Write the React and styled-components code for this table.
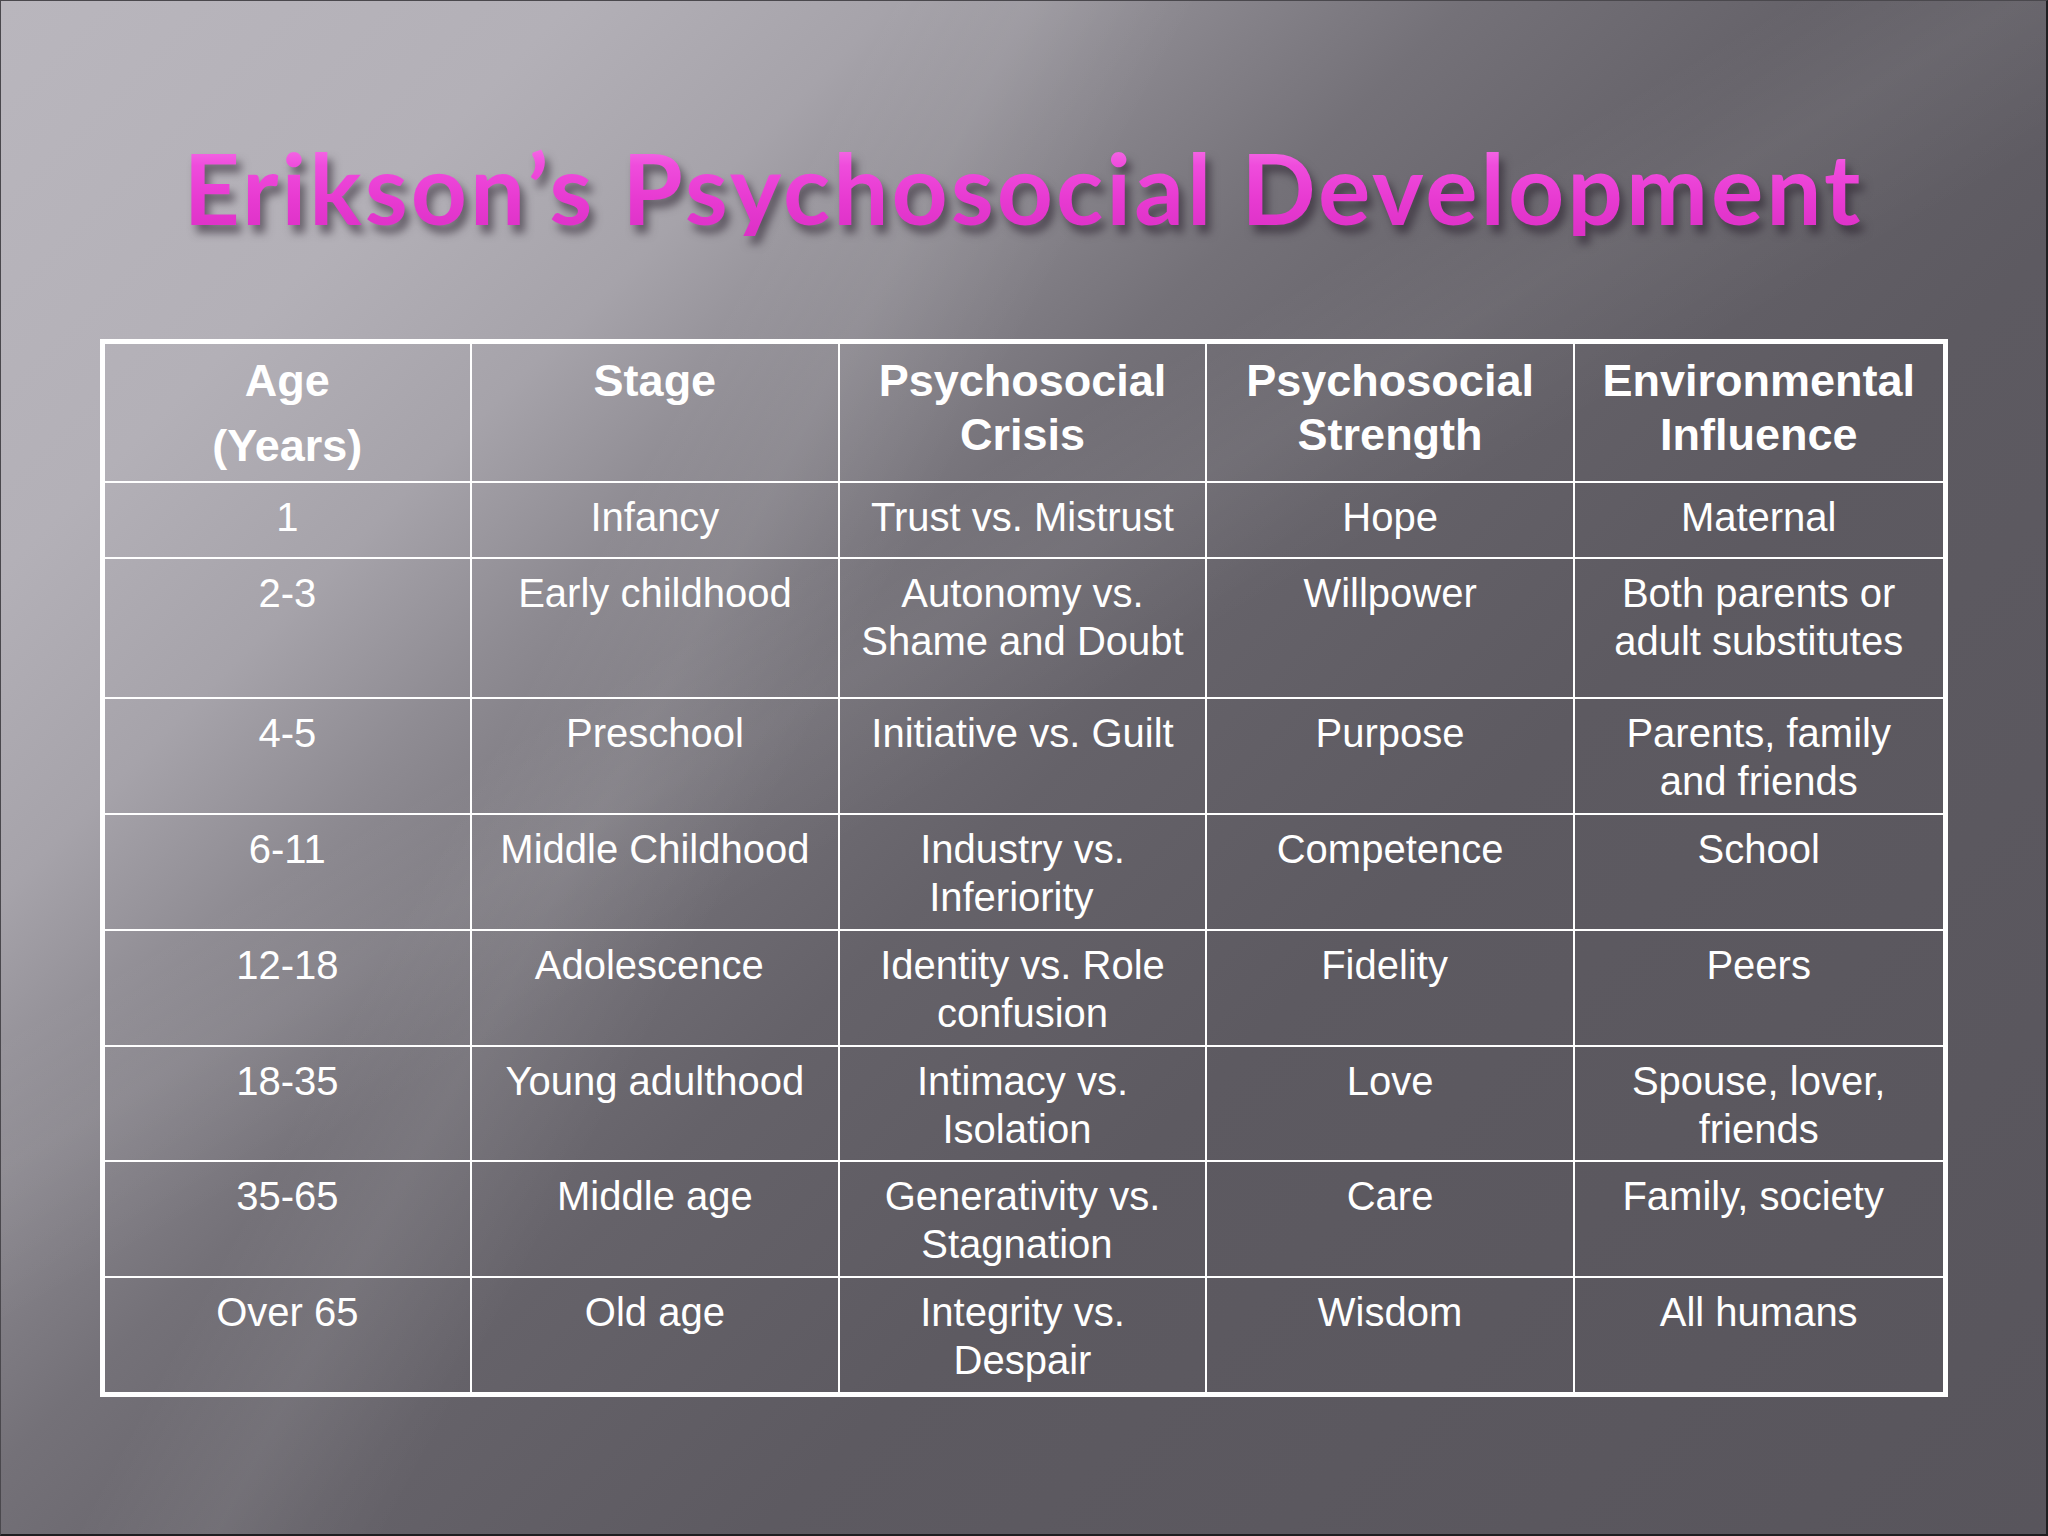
import React from 'react';
import styled, { createGlobalStyle } from 'styled-components';

const Global = createGlobalStyle`
  html, body { margin: 0; padding: 0; background: #58555c; }
  #root { width: 2048px; height: 1536px; }
`;

const Slide = styled.div`
  box-sizing: border-box;
  width: 2048px;
  height: 1536px;
  border-top: 1px solid #4a484d;
  border-left: 1px solid #4a484d;
  border-right: 2px solid #1f1e21;
  border-bottom: 2px solid #1f1e21;
  display: flex;
  flex-direction: column;
  align-items: center;
  font-family: "Liberation Sans", Arial, sans-serif;
  background:
    linear-gradient(118deg, rgba(255,255,255,0) 0%, rgba(255,255,255,0) 31%, rgba(255,255,255,0.07) 36%, rgba(255,255,255,0) 42%, rgba(255,255,255,0) 100%),
    linear-gradient(150deg, rgba(255,255,255,0) 0%, rgba(255,255,255,0) 38%, rgba(255,255,255,0.05) 43%, rgba(255,255,255,0) 49%, rgba(255,255,255,0) 100%),
    linear-gradient(135deg, #b9b6bd 0%, #b3b0b7 16%, #a6a3aa 25%, #8e8b92 32%, #747178 41%, #656269 51%, #5d5a61 64%, #58555c 100%);
`;

const Title = styled.h1`
  margin: 137px 0 0;
  font-family: Lato, "Open Sans", sans-serif;
  font-weight: 700;
  font-size: 98px;
  line-height: 98px;
  letter-spacing: 3px;
  white-space: nowrap;
  color: transparent;
  background: linear-gradient(to bottom, #f77be9 0%, #ef4cdc 28%, #e83bd2 60%, #dc30c6 100%);
  -webkit-background-clip: text;
  background-clip: text;
  filter: drop-shadow(5px 8px 4px rgba(35, 25, 38, 0.55));
`;

const Grid = styled.div`
  box-sizing: border-box;
  width: 1848px;
  margin-top: 103px;
  border: 5px solid #ffffff;
  display: grid;
  grid-template-columns: repeat(5, 1fr);
  grid-template-rows: 139px 76px 140px 116px 116px 116px 115px 116px 114px;
`;

const Cell = styled.div`
  box-sizing: border-box;
  border-right: ${p => (p.$lastCol ? 0 : 2)}px solid #ffffff;
  border-bottom: ${p => (p.$lastRow ? 0 : 2)}px solid #ffffff;
  padding: 10px 4px 0;
  text-align: center;
  color: #ffffff;
  white-space: nowrap;
  font-size: ${p => (p.$head ? 45 : 40)}px;
  font-weight: ${p => (p.$head ? 700 : 400)};
  line-height: ${p => (p.$head ? 54 : 48)}px;
`;

const Para = styled.span`
  display: block;
  margin-top: ${p => p.$gap || 0}px;
`;

const header = [
  ['Age', '(Years)'],
  ['Stage'],
  ['Psychosocial', 'Crisis'],
  ['Psychosocial', 'Strength'],
  ['Environmental', 'Influence'],
];

const rows = [
  [['1'], ['Infancy'], ['Trust vs. Mistrust'], ['Hope'], ['Maternal']],
  [['2-3'], ['Early childhood'], ['Autonomy vs.', 'Shame and Doubt'], ['Willpower'], ['Both parents or', 'adult substitutes']],
  [['4-5'], ['Preschool'], ['Initiative vs. Guilt'], ['Purpose'], ['Parents, family', 'and friends']],
  [['6-11'], ['Middle Childhood'], ['Industry vs.', 'Inferiority\u00a0\u00a0'], ['Competence'], ['School']],
  [['12-18'], ['Adolescence\u00a0'], ['Identity vs. Role', 'confusion'], ['Fidelity\u00a0'], ['Peers']],
  [['18-35'], ['Young adulthood'], ['Intimacy vs.', 'Isolation\u00a0'], ['Love'], ['Spouse, lover,', 'friends']],
  [['35-65'], ['Middle age'], ['Generativity vs.', 'Stagnation\u00a0'], ['Care'], ['Family, society\u00a0']],
  [['Over 65'], ['Old age'], ['Integrity vs.', 'Despair'], ['Wisdom'], ['All humans']],
];

const Lines = ({ lines }) =>
  lines.map((l, i) => (
    <React.Fragment key={i}>
      {i > 0 && <br />}
      {l}
    </React.Fragment>
  ));

export default function App() {
  return (
    <>
      <Global />
      <Slide>
        <Title>Erikson’s Psychosocial Development</Title>
        <Grid>
          {header.map((h, c) => (
            <Cell key={'h' + c} $head $lastCol={c === 4}>
              {c === 0 ? (
                <>
                  <Para>{h[0]}</Para>
                  <Para $gap={11}>{h[1]}</Para>
                </>
              ) : (
                <Lines lines={h} />
              )}
            </Cell>
          ))}
          {rows.map((r, ri) =>
            r.map((cell, c) => (
              <Cell key={ri + '-' + c} $lastCol={c === 4} $lastRow={ri === rows.length - 1}>
                <Lines lines={cell} />
              </Cell>
            ))
          )}
        </Grid>
      </Slide>
    </>
  );
}
